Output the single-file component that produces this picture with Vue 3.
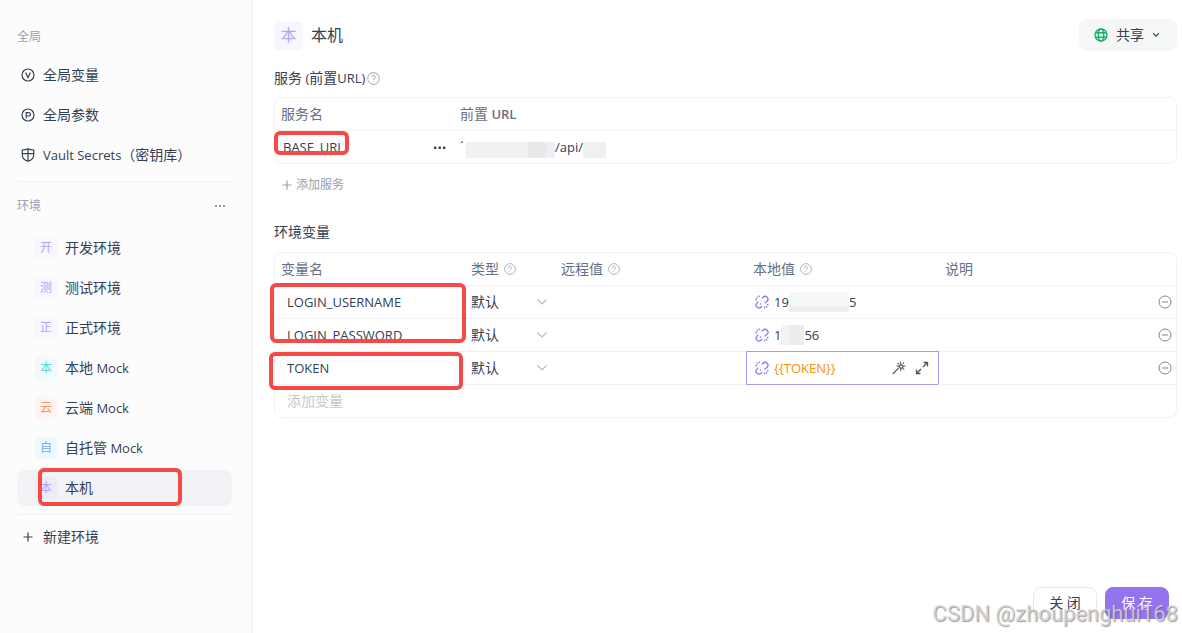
<script setup>
import { ref } from 'vue'

const globals = [
  { icon: 'v', cjk: '全局变量' },
  { icon: 'p', cjk: '全局参数' },
  { icon: 'vault', latin: 'Vault Secrets', cjk: '（密钥库）' },
]

const environments = [
  { tile: '开', cjk: '开发环境', tone: 'violet' },
  { tile: '测', cjk: '测试环境', tone: 'violet' },
  { tile: '正', cjk: '正式环境', tone: 'violet' },
  { tile: '本', cjk: '本地', latin: 'Mock', tone: 'teal' },
  { tile: '云', cjk: '云端', latin: 'Mock', tone: 'orange' },
  { tile: '自', cjk: '自托管', latin: 'Mock', tone: 'blue' },
  { tile: '本', cjk: '本机', tone: 'violet', active: true },
]

const serviceName = ref('BASE_URL')
const variables = ref([
  { name: 'LOGIN_USERNAME', type: '默认', head: '19', tail: '5', mask: 'wide' },
  { name: 'LOGIN_PASSWORD', type: '默认', head: '1', tail: '56', mask: 'narrow' },
  { name: 'TOKEN', type: '默认', token: '{{TOKEN}}' },
])
</script>

<template>
  <div class="page">
    <aside class="sidebar">
      <div class="group-label"><span>全局</span></div>
      <nav>
        <a v-for="g in globals" :key="g.cjk" href="#" class="nav-item">
          <svg class="nav-icon" viewBox="0 0 14 14" aria-hidden="true">
            <template v-if="g.icon === 'v'">
              <circle cx="7" cy="7" r="6" />
              <path d="M4.600 4.600 7 9.600 9.400 4.600" />
            </template>
            <template v-else-if="g.icon === 'p'">
              <circle cx="7" cy="7" r="6" />
              <path d="M5.200 10.200V4.600h2.600a1.700 1.700 0 0 1 0 3.400H5.200" />
            </template>
            <template v-else>
              <path d="M7 .9C5.400 1.700 3.400 2 1.300 2v5c0 3.400 2.300 5.200 5.700 6.200 3.400-1 5.700-2.800 5.700-6.200V2C10.600 2 8.600 1.700 7 .9Z" />
              <path d="M7 1v12M1.300 5.600h11.400" />
            </template>
          </svg>
          <span v-if="g.latin" class="latin">{{ g.latin }}</span><span>{{ g.cjk }}</span>
        </a>
      </nav>
      <hr />
      <div class="group-label">
        <span>环境</span>
        <button type="button" class="icon-btn" aria-label="更多">
          <svg width="10" height="2" viewBox="0 0 10 2" fill="#8f97a5"><path d="M0 0h2v2H0zM4 0h2v2H4zM8 0h2v2H8z" /></svg>
        </button>
      </div>
      <nav class="env-list">
        <a v-for="(e, i) in environments" :key="i" href="#" class="nav-item env" :class="{ active: e.active }">
          <span class="tile" :class="e.tone">{{ e.tile }}</span>
          <span>{{ e.cjk }}<span v-if="e.latin" class="latin">&nbsp;{{ e.latin }}</span></span>
          <span v-if="e.active" class="mark mark-env"></span>
        </a>
      </nav>
      <hr />
      <button type="button" class="nav-item new-env">
        <svg class="nav-icon" viewBox="0 0 14 14" aria-hidden="true"><path d="M7 2.500v9M2.500 7h9" /></svg>
        <span>新建环境</span>
      </button>
    </aside>

    <main>
      <header>
        <span class="tile big violet">本</span>
        <h1>本机</h1>
        <button type="button" class="share">
          <svg width="14" height="14" viewBox="0 0 14 14" fill="none" stroke="#17b26a" stroke-width="1.400" aria-hidden="true">
            <circle cx="7" cy="7" r="6" /><ellipse cx="7" cy="7" rx="2.700" ry="6" /><path d="M1.400 4.800h11.200M1.400 9.200h11.200" />
          </svg>
          <span>共享</span>
          <svg width="8" height="8" viewBox="0 0 8 8" fill="none" stroke="#344054" stroke-width="1.300" aria-hidden="true"><path d="m1.300 2.400 2.700 2.700 2.700-2.700" /></svg>
        </button>
      </header>

      <h2 class="service-title">服务<span class="latin">&nbsp;(</span>前置<span class="latin">URL)</span>
        <svg class="help" viewBox="0 0 12 12" role="img" aria-label="帮助"><circle cx="6" cy="6" r="5.400" /><path d="M4.500 4.800a1.500 1.500 0 1 1 2.300 1.200c-.6.400-.8.600-.8 1.200M6 8.200v1" /></svg>
      </h2>
      <table class="services">
        <colgroup><col class="c-service" /><col /></colgroup>
        <thead>
          <tr><th>服务名</th><th>前置<span class="latin">&nbsp;URL</span></th></tr>
        </thead>
        <tbody>
          <tr>
            <td>
              <div class="cell">
                <input v-model="serviceName" class="field latin service-name" type="text" aria-label="服务名" />
                <button type="button" class="icon-btn" aria-label="更多操作">
                  <svg width="12" height="3" viewBox="0 0 12 3" fill="#344054"><rect y=".5" width="2.400" height="2.400" rx=".5" /><rect x="4.500" y=".5" width="2.400" height="2.400" rx=".5" /><rect x="9" y=".5" width="2.400" height="2.400" rx=".5" /></svg>
                </button>
              </div>
              <span class="mark mark-service"></span>
            </td>
            <td>
              <div class="cell url latin">
                <svg width="6" height="16" viewBox="0 0 6 16" aria-hidden="true"><path d="m.5 4 2-1.500V4" fill="none" stroke="#667085" /></svg>
                <span class="mosaic m-host"></span><span>/api/</span><span class="mosaic m-path"></span>
              </div>
            </td>
          </tr>
        </tbody>
      </table>
      <button type="button" class="add-service">
        <svg width="10" height="10" viewBox="0 0 10 10" fill="none" stroke="#98a2b3" stroke-width="1.200" aria-hidden="true"><path d="M5 .5v9M.5 5h9" /></svg>
        添加服务
      </button>

      <h2 class="vars-title">环境变量</h2>
      <table class="variables">
        <colgroup><col class="c-name" /><col class="c-type" /><col class="c-value" /><col class="c-value" /><col /><col class="c-remove" /></colgroup>
        <thead>
          <tr>
            <th>变量名</th>
            <th v-for="label in ['类型', '远程值', '本地值']" :key="label">
              <div class="head">{{ label }}
                <svg class="help" viewBox="0 0 12 12" role="img" aria-label="帮助"><circle cx="6" cy="6" r="5.400" /><path d="M4.500 4.800a1.500 1.500 0 1 1 2.300 1.200c-.6.400-.8.600-.8 1.200M6 8.200v1" /></svg>
              </div>
            </th>
            <th>说明</th>
            <th></th>
          </tr>
        </thead>
        <tbody>
          <tr v-for="(v, i) in variables" :key="i">
            <td>
              <input v-model="v.name" class="field latin" type="text" aria-label="变量名" />
              <span v-if="i === 0" class="mark mark-login"></span>
              <span v-if="i === 2" class="mark mark-token"></span>
            </td>
            <td>
              <div class="cell">
                <select v-model="v.type" aria-label="类型"><option>默认</option></select>
                <svg class="chevron" width="10" height="6" viewBox="0 0 10 6" fill="none" stroke="#b4bac4" stroke-width="1.200" aria-hidden="true"><path d="m.5.5 4.500 4.500L9.500.5" /></svg>
              </div>
            </td>
            <td></td>
            <td :class="{ focused: v.token }">
              <div class="cell local latin">
                <svg class="unlink" viewBox="0 0 14 14" aria-hidden="true">
                  <path d="M3.200 6.600 2 8.100a2.800 2.800 0 0 0 3.900 4.100l1.200-1M6.900 3.400 8.100 2.200a2.800 2.800 0 0 1 4 4L10.700 7.500 9.500 8.100M5 9.200l1-.8" />
                  <path d="M4.200.5v1.600M.4 4.500h1.700M1.700 1.700l1 1M9.700 11.600v1.700M11.800 9.700h1.700M11.200 11.200l1 1" />
                </svg>
                <template v-if="v.token">
                  <input v-model="v.token" class="token latin" type="text" aria-label="本地值" />
                  <button type="button" class="icon-btn tool" aria-label="动态值">
                    <svg width="14" height="14" viewBox="0 0 14 14" fill="none" stroke="#475467" stroke-width="1.100"><path d="M.8 13 6.900 6.900M8.600 3.300l1.500 1 1.300.8-1 1.700-1.600 1-1-1.600-1.200-.9 1.300-.7zM8.500.8v1.700M4.600 5h1.700M5.600 2l1.300 1.300M12 1.700l-1.200 1.200M11.700 5h1.700M11 7.400l1.200 1.200M8.700 8.300V10" /></svg>
                  </button>
                  <button type="button" class="icon-btn tool" aria-label="展开">
                    <svg width="14" height="14" viewBox="0 0 14 14" fill="none" stroke="#475467" stroke-width="1.300"><path d="M8.500 1.500h4v4M12.500 1.500 8 6M5.500 12.500h-4v-4M1.500 12.500 6 8" /></svg>
                  </button>
                </template>
                <template v-else>
                  <span>{{ v.head }}</span><span class="mosaic" :class="'m-' + v.mask"></span><span>{{ v.tail }}</span>
                </template>
              </div>
            </td>
            <td></td>
            <td>
              <button type="button" class="icon-btn" aria-label="删除">
                <svg width="14" height="14" viewBox="0 0 14 14" fill="none" stroke="#7d8696"><circle cx="7" cy="7" r="6" /><path d="M4 7h6" stroke="#98a2b3" stroke-width="1.300" /></svg>
              </button>
            </td>
          </tr>
          <tr>
            <td colspan="6"><input class="field" type="text" placeholder="添加变量" aria-label="添加变量" /></td>
          </tr>
        </tbody>
      </table>

      <footer>
        <button type="button" class="btn">关 闭</button>
        <button type="button" class="btn primary">保 存</button>
      </footer>
    </main>
    <div class="watermark">CSDN @zhoupenghui168</div>
  </div>
</template>

<style>
body {
  margin: 0;
}
</style>

<style scoped>
* {
  box-sizing: border-box;
}
.page {
  position: relative;
  display: flex;
  min-height: 100vh;
  overflow: hidden;
  background: #fff;
  color: #344054;
  font-family: "Open Sans", "Noto Sans CJK SC", sans-serif;
  font-size: 14px;
  line-height: 20px;
}
button,
input,
select {
  margin: 0;
  padding: 0;
  border: 0;
  outline: 0;
  background: none;
  color: inherit;
  font: inherit;
}
.latin,
input.latin {
  font-size: 13px;
}
.sidebar {
  flex: 0 0 253px;
  padding: 17px 20px 0 17px;
  border-right: 1px solid #f1f1f3;
  background: #fcfcfc;
}
.group-label {
  display: flex;
  align-items: center;
  justify-content: space-between;
  height: 40px;
  padding-right: 7px;
  color: #98a0ae;
  font-size: 12px;
}
nav {
  display: flex;
  flex-direction: column;
  gap: 4px;
  padding-bottom: 4px;
}
.env-list {
  padding-top: 4px;
}
hr {
  height: 1px;
  margin: 4px 0;
  border: 0;
  background: #f2f2f4;
}
.nav-item {
  position: relative;
  display: flex;
  align-items: center;
  width: 100%;
  height: 36px;
  padding-left: 4px;
  border-radius: 8px;
  color: inherit;
  text-decoration: none;
}
.nav-item.env {
  gap: 8px;
  padding-left: 18px;
}
.nav-item.active {
  background: #f2f3f7;
}
.nav-icon {
  width: 14px;
  height: 14px;
  margin-right: 8px;
  fill: none;
  stroke: #344054;
  stroke-width: 1.2;
}
.tile {
  display: flex;
  align-items: center;
  justify-content: center;
  width: 22px;
  height: 22px;
  border-radius: 4px;
  font-size: 12px;
}
.tile.big {
  width: 29px;
  height: 29px;
  font-size: 16px;
}
.violet {
  background: #f8f6fe;
  color: #b9a3f5;
}
.active .violet {
  background: #eeebf8;
}
.teal {
  background: #f0fafb;
  color: #5fd6d0;
}
.orange {
  background: #fff4f1;
  color: #ff9068;
}
.blue {
  background: #f0f8ff;
  color: #64b1fb;
}
.icon-btn {
  display: flex;
  align-items: center;
  justify-content: center;
}
main {
  display: flex;
  flex: 1;
  flex-direction: column;
  align-items: stretch;
  min-width: 0;
  padding: 19px 5px 14px 21px;
}
header {
  display: flex;
  align-items: center;
  gap: 8px;
  height: 32px;
}
h1,
h2 {
  margin: 0;
  font-weight: 400;
}
h1 {
  font-size: 16px;
}
h2 {
  display: flex;
  align-items: center;
  font-size: 14px;
}
.service-title {
  margin: 17px 0 9px;
}
.vars-title {
  margin: 27px 0 10px;
}
.share {
  display: flex;
  align-items: center;
  gap: 8px;
  height: 32px;
  margin-left: auto;
  padding: 0 17px 0 15px;
  border-radius: 8px;
  background: #f4f7f6;
}
.help {
  width: 12px;
  height: 12px;
  fill: none;
  stroke: #b0b7c3;
}
.service-title .help {
  width: 13px;
  height: 13px;
  margin-left: 2px;
}
table {
  width: 100%;
  table-layout: fixed;
  border: 1px solid #f2f2f6;
  border-radius: 8px;
  border-spacing: 0;
}
th,
td {
  position: relative;
  height: 33px;
  padding: 0 0 0 6px;
  border-bottom: 1px solid #f2f2f6;
  font-weight: 400;
  text-align: left;
}
tbody tr:last-child td {
  height: 32px;
  border-bottom: 0;
}
th {
  color: #667085;
}
th .latin {
  font-weight: 600;
}
.c-service {
  width: 179px;
}
.c-name {
  width: 189px;
}
.c-type {
  width: 90px;
}
.c-value {
  width: 192px;
}
.c-remove {
  width: 23px;
}
.cell,
.head {
  display: flex;
  align-items: center;
}
.head {
  gap: 5px;
}
.field {
  display: block;
  width: 100%;
  height: 20px;
  padding-left: 6px;
}
.field::placeholder {
  color: #c5c8ce;
  opacity: 1;
}
.service-name {
  flex: 1;
  min-width: 0;
  padding-left: 2px;
}
.services .icon-btn {
  margin-right: 8px;
}
select {
  flex: 1;
  height: 20px;
  appearance: none;
}
.chevron {
  margin-right: 7px;
}
.mosaic {
  height: 20px;
  background: linear-gradient(90deg, #f5f6f6 50%, #f2f3f4 50%);
}
.url .mosaic {
  height: 16px;
  margin-top: 6px;
}
.m-host {
  width: 89px;
  background: linear-gradient(90deg, #f0f1f2 70%, #e7e8ea 70%, #e7e8ea 90%, #eeeff1 90%);
}
.m-path {
  width: 23px;
  background: #eff0f2;
}
.m-wide {
  width: 60px;
  background: linear-gradient(180deg, #f6f7f7 70%, #eeeff0 70%);
}
.m-narrow {
  width: 23px;
  background: linear-gradient(90deg, #f3f2f9 35%, #ebecee 35%);
}
.variables th:nth-child(n + 2),
.variables td:nth-child(n + 2) {
  padding-left: 7px;
}
.local {
  padding-left: 2px;
}
.unlink {
  width: 14px;
  height: 14px;
  margin-right: 5px;
  fill: none;
  stroke: #9373ee;
  stroke-width: 1.3;
}
.focused::before {
  content: "";
  position: absolute;
  inset: -1px -1px -1px 0;
  border: 1px solid #b197f5;
  pointer-events: none;
}
.token {
  flex: 1;
  min-width: 0;
  color: #f79009;
}
.tool {
  margin-right: 9px;
}
.variables td:last-child .icon-btn {
  margin-left: -2px;
}
.add-service {
  display: flex;
  align-items: center;
  gap: 4px;
  align-self: flex-start;
  height: 20px;
  margin-top: 11px;
  padding-left: 8px;
  color: #98a0ae;
  font-size: 12px;
}
footer {
  display: flex;
  justify-content: flex-end;
  gap: 8px;
  margin-top: auto;
  padding-right: 8px;
}
.btn {
  width: 64px;
  height: 32px;
  border: 1px solid #e8e9ef;
  border-radius: 8px;
  background: #fff;
}
.btn.primary {
  border-color: #9373ee;
  background: #9373ee;
  color: #fff;
}
.mark {
  position: absolute;
  z-index: 1;
  border: 4px solid #f54a45;
  border-radius: 6px;
  pointer-events: none;
}
.mark-env {
  top: -2px;
  left: 21px;
  width: 144px;
  height: 38px;
}
.mark-service {
  top: 0;
  left: -1px;
  width: 75px;
  height: 24px;
}
.mark-login {
  top: -3px;
  left: -5px;
  width: 196px;
  height: 60px;
}
.mark-token {
  top: 0;
  left: -6px;
  width: 194px;
  height: 38px;
}
.watermark {
  position: absolute;
  right: 4px;
  bottom: 5px;
  color: rgba(215, 215, 215, 0.8);
  font-family: Roboto, "Liberation Sans", sans-serif;
  font-size: 22px;
  line-height: 28px;
  text-shadow: 1px 1px 1px rgba(90, 90, 90, 0.6);
  pointer-events: none;
}
</style>
